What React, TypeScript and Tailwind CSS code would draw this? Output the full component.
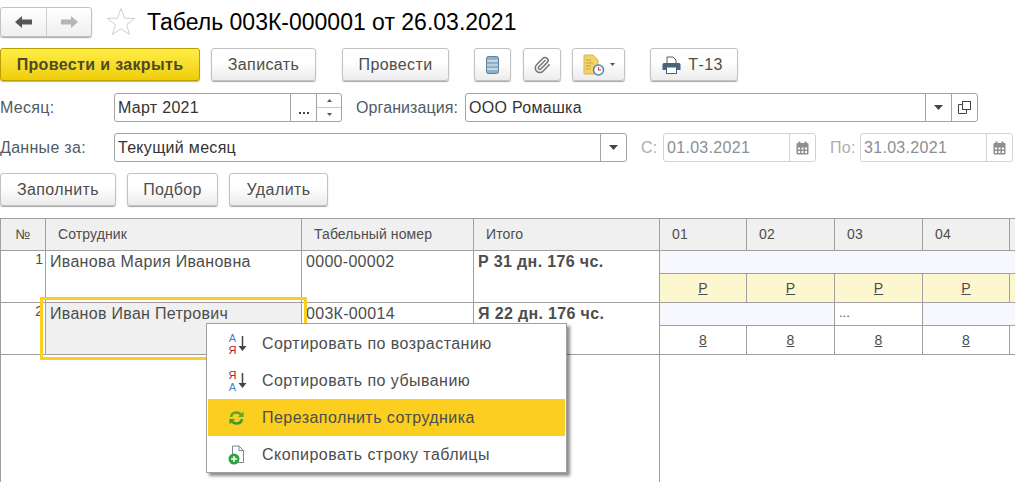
import { ReactNode } from "react";
import { Paperclip } from "lucide-react";

const Btn = ({ className = "", children }: { className?: string; children: ReactNode }) => (
  <div
    className={`h-[33px] flex items-center justify-center border border-[#c2c2c2] rounded-[3px] bg-gradient-to-b from-white from-40% to-[#ececec] text-[16px] tracking-[0.4px] text-[#4d4d4d] shadow-[0_1px_1px_rgba(0,0,0,0.35)] ${className}`}
  >
    {children}
  </div>
);

const Arrow = ({ flip, color }: { flip?: boolean; color: string }) => (
  <svg width="18" height="14" viewBox="0 0 18 14" className={flip ? "-scale-x-100" : ""}>
    <path d="M0 7 L7 1 V4.5 H17 V9.5 H7 V13 Z" fill={color} />
  </svg>
);

const Caret = () => (
  <svg width="9" height="5" viewBox="0 0 9 5">
    <path d="M0 0 H9 L4.5 5 Z" fill="#444" />
  </svg>
);

const Calendar = () => (
  <svg width="13" height="14" viewBox="0 0 13 14">
    <rect x="0.5" y="2" width="12" height="11.5" rx="1" fill="#8f8f8f" />
    <rect x="2.5" y="0.5" width="2" height="3" fill="#8f8f8f" />
    <rect x="8.5" y="0.5" width="2" height="3" fill="#8f8f8f" />
    <path d="M2 6.5h2v2H2zM5.500 6.500h2v2h-2zM9 6.500h2v2H9zM2 10h2v2H2zM5.500 10h2v2h-2zM9 10h2v2H9z" fill="#fff" />
  </svg>
);

const SortIcon = ({ desc }: { desc?: boolean }) => (
  <div className="w-[20px] h-[24px] flex items-center">
    <div className="flex flex-col text-[11px] leading-[12px] text-center w-[9px]">
      <span className={desc ? "text-[#b32020]" : "text-[#3d85c6]"}>{desc ? "Я" : "А"}</span>
      <span className={desc ? "text-[#3d85c6]" : "text-[#b32020]"}>{desc ? "А" : "Я"}</span>
    </div>
    <svg width="9" height="16" viewBox="0 0 9 16" className="ml-[1px]">
      <path d="M4.500 0 V11" stroke="#444" strokeWidth="1.500" />
      <path d="M0.500 10 H8.500 L4.500 15 Z" fill="#444" />
    </svg>
  </div>
);

const MenuItem = ({ icon, label, active }: { icon: ReactNode; label: string; active?: boolean }) => (
  <div className={`h-[37px] flex items-center ${active ? "bg-[#fbce1f]" : ""}`}>
    <div className="w-[54px] pl-[20px] shrink-0 flex items-center">{icon}</div>
    <span className="text-[16px] tracking-[0.45px] text-[#4d4d4d] whitespace-nowrap">{label}</span>
  </div>
);

const Head = ({ children, className = "" }: { children?: ReactNode; className?: string }) => (
  <div className={`bg-[#f0f0f0] border-r border-b border-[#a0a0a0] flex items-center text-[14px] tracking-[0.1px] text-[#4d4d4d] ${className}`}>
    {children}
  </div>
);

const days = ["01", "02", "03", "04", ""];

const cell = "row-span-2 border-r border-b border-[#a0a0a0] pl-[4px] text-[16px] leading-[22px] tracking-[0.3px] text-[#4d4d4d]";
const num = "row-span-2 border-r border-b border-[#a0a0a0] text-right pr-[2px] text-[14px] leading-[16px] text-[#4d4d4d]";
const total = "row-span-2 border-r border-b border-[#a0a0a0] pl-[4px] text-[16px] leading-[22px] font-bold tracking-[0.35px] text-[#4d4d4d]";

export default function App() {
  return (
    <div
      className="w-[1015px] h-[482px] overflow-hidden bg-white text-[#4d4d4d]"
      style={{ fontFamily: '"Liberation Sans", Arial, sans-serif' }}
    >
      {/* title */}
      <div className="h-[48px] pt-[7px] flex items-start">
        <div className="w-[92px] h-[30px] flex border border-[#c2c2c2] rounded-[3px] bg-gradient-to-b from-white to-[#efefef] shadow-[0_1px_1px_rgba(0,0,0,0.35)]">
          <div className="w-[46px] flex items-center justify-center border-r border-[#cfcfcf]">
            <Arrow color="#555" />
          </div>
          <div className="flex-1 flex items-center justify-center">
            <Arrow flip color="#b5b5b5" />
          </div>
        </div>
        <svg width="30" height="30" viewBox="0 0 30 30" className="ml-[14px]">
          <path d="M15 1.500 L18.600 11.200 L28.800 11.400 L20.600 17.700 L23.600 27.600 L15 21.700 L6.400 27.600 L9.400 17.700 L1.200 11.400 L11.400 11.200 Z" fill="none" stroke="#ccd0d4" strokeWidth="1" />
        </svg>
        <span className="ml-[11px] text-[23px] leading-[30px] text-black whitespace-nowrap">Табель 003К-000001 от 26.03.2021</span>
      </div>

      {/* command bar */}
      <div className="flex">
        <div className="w-[200px] h-[33px] flex items-center justify-center border border-[#b9a000] rounded-[3px] bg-gradient-to-b from-[#ffee44] to-[#efcd00] text-[16px] tracking-[0.35px] font-bold text-[#4d4a26] shadow-[0_1px_1px_rgba(0,0,0,0.3)]">
          Провести и закрыть
        </div>
        <Btn className="w-[105px] ml-[11px]">Записать</Btn>
        <Btn className="w-[107px] ml-[26px]">Провести</Btn>
        <Btn className="w-[37px] ml-[25px]">
          <svg width="13" height="18" viewBox="0 0 13 18">
            <rect x="0.500" y="0.500" width="12" height="17" rx="2" fill="#8fb0c8" stroke="#5f7f97" />
            <path d="M1 4.800H12M1 9H12M1 13.200H12" stroke="#e4edf3" strokeWidth="1.200" />
          </svg>
        </Btn>
        <Btn className="w-[38px] ml-[12px]">
          <Paperclip size={18} color="#777" />
        </Btn>
        <Btn className="w-[53px] ml-[11px] gap-[5px]">
          <svg width="22" height="22" viewBox="0 0 22 22">
            <path d="M1 1 H10 L15 6 V20 H1 Z" fill="#f1d26b" stroke="#d9b64a" />
            <path d="M3 6H8M3 9H10M3 12H8M3 15H7" stroke="#c9a53f" />
            <circle cx="15.500" cy="16" r="5" fill="#fff" stroke="#4f86b5" strokeWidth="1.500" />
            <path d="M15.500 13 V16 H18" stroke="#d0402b" strokeWidth="1.200" fill="none" />
          </svg>
          <svg width="5" height="3" viewBox="0 0 5 3">
            <path d="M0 0 H5 L2.500 3 Z" fill="#555" />
          </svg>
        </Btn>
        <Btn className="w-[88px] ml-[25px] gap-[7px] pr-[3px]">
          <svg width="19" height="18" viewBox="0 0 19 18">
            <path d="M5 1 H11 L14 4 V8 H5 Z" fill="#fff" stroke="#47637d" />
            <path d="M2 7 H17 a1.500 1.500 0 0 1 1.500 1.500 V14 H0.500 V8.500 A1.500 1.500 0 0 1 2 7 Z" fill="#47637d" />
            <rect x="4.500" y="11" width="10" height="6.500" fill="#fff" stroke="#47637d" />
          </svg>
          <span>Т-13</span>
        </Btn>
      </div>

      {/* month / organization */}
      <div className="flex items-center mt-[12px] h-[29px] text-[16px] tracking-[0.3px]">
        <span className="w-[114px] text-[#4f5b66]">Месяц:</span>
        <div className="w-[228px] h-[29px] flex border border-[#a3a3a3] rounded-[3px]">
          <span className="flex-1 pl-[3px] leading-[27px] text-[#333]">Март 2021</span>
          <div className="w-[26px] border-l border-[#a3a3a3] flex items-end justify-center pb-[7px]">
            <div className="flex gap-[2px]">
              <i className="w-[2px] h-[2px] bg-[#444]" />
              <i className="w-[2px] h-[2px] bg-[#444]" />
              <i className="w-[2px] h-[2px] bg-[#444]" />
            </div>
          </div>
          <div className="w-[25px] border-l border-[#a3a3a3] flex flex-col">
            <div className="flex-1 border-b border-[#c4c4c4] flex items-center justify-center">
              <svg width="5" height="3" viewBox="0 0 5 3"><path d="M0 3 H5 L2.500 0 Z" fill="#555" /></svg>
            </div>
            <div className="flex-1 flex items-center justify-center">
              <svg width="5" height="3" viewBox="0 0 5 3"><path d="M0 0 H5 L2.500 3 Z" fill="#555" /></svg>
            </div>
          </div>
        </div>
        <span className="w-[123px] pl-[14px] whitespace-nowrap tracking-[0.1px] text-[#4f5b66]">Организация:</span>
        <div className="w-[513px] h-[29px] flex border border-[#a3a3a3] rounded-[3px]">
          <span className="flex-1 pl-[3px] leading-[27px] text-[#333]">ООО Ромашка</span>
          <div className="w-[26px] border-l border-[#a3a3a3] flex items-center justify-center">
            <Caret />
          </div>
          <div className="w-[26px] border-l border-[#a3a3a3] flex items-center justify-center">
            <svg width="13" height="13" viewBox="0 0 13 13" fill="none" stroke="#444">
              <rect x="4.500" y="0.500" width="8" height="8" />
              <path d="M4.500 3.500 H0.500 V12.500 H8.500 V8.500" />
            </svg>
          </div>
        </div>
      </div>

      {/* period */}
      <div className="flex items-center mt-[11px] h-[29px] text-[16px] tracking-[0.3px]">
        <span className="w-[114px] text-[#4f5b66]">Данные за:</span>
        <div className="w-[513px] h-[29px] flex border border-[#a3a3a3] rounded-[3px]">
          <span className="flex-1 pl-[3px] leading-[27px] text-[#333]">Текущий месяц</span>
          <div className="w-[26px] border-l border-[#a3a3a3] flex items-center justify-center">
            <Caret />
          </div>
        </div>
        <span className="w-[36px] pl-[14px] text-[#aeaeae]">С:</span>
        <div className="w-[153px] h-[29px] flex border border-[#d2d2d2] rounded-[3px]">
          <span className="flex-1 pl-[3px] leading-[27px] text-[#8a8f96]">01.03.2021</span>
          <div className="w-[26px] border-l border-[#d2d2d2] flex items-center justify-center">
            <Calendar />
          </div>
        </div>
        <span className="w-[44px] pl-[14px] text-[#aeaeae]">По:</span>
        <div className="w-[153px] h-[29px] flex border border-[#d2d2d2] rounded-[3px]">
          <span className="flex-1 pl-[3px] leading-[27px] text-[#8a8f96]">31.03.2021</span>
          <div className="w-[26px] border-l border-[#d2d2d2] flex items-center justify-center">
            <Calendar />
          </div>
        </div>
      </div>

      {/* table commands */}
      <div className="flex gap-[11px] mt-[11px]">
        <Btn className="w-[116px]">Заполнить</Btn>
        <Btn className="w-[91px]">Подбор</Btn>
        <Btn className="w-[99px]">Удалить</Btn>
      </div>

      {/* table */}
      <div className="relative mt-[12px] h-[264px] border-l border-[#a0a0a0]">
        <div className="grid grid-cols-[45px_256px_172px_186px_87px_88px_88px_87px_87px] grid-rows-[32px_23px_29px_23px_29px] border-t border-[#a0a0a0] w-[1100px]">
          <Head className="justify-center">№</Head>
          <Head className="pl-[12px]">Сотрудник</Head>
          <Head className="pl-[12px]">Табельный номер</Head>
          <Head className="pl-[12px]">Итого</Head>
          {days.map((d, i) => (
            <Head key={i} className="pl-[12px]">{d}</Head>
          ))}

          <div className={num}>1</div>
          <div className={cell}>Иванова Мария Ивановна</div>
          <div className={cell}>0000-00002</div>
          <div className={total}>Р 31 дн. 176 чс.</div>
          <div className="col-span-5 bg-[#f7f8fd] border-b border-[#a0a0a0]" />
          {days.map((d, i) => (
            <div key={i} className="bg-[#fdf7cf] border-r border-b border-[#a0a0a0] flex items-center justify-center text-[14px] underline text-[#4d4d4d]">
              {d && "Р"}
            </div>
          ))}

          <div className={num}>2</div>
          <div className={`relative bg-[#f0f0f0] ${cell}`}>
            Иванов Иван Петрович
            <div className="absolute -left-[6px] -top-[6px] w-[267px] h-[63px] border-[3px] border-[#fbce1f]" />
          </div>
          <div className={cell}>003К-00014</div>
          <div className={total}>Я 22 дн. 176 чс.</div>
          <div className="col-span-2 bg-[#f7f8fd] border-b border-r border-[#a0a0a0]" />
          <div className="border-r border-b border-[#a0a0a0] pl-[4px] text-[13px] leading-[20px] text-[#4d4d4d]">...</div>
          <div className="col-span-2 bg-[#f7f8fd] border-b border-[#a0a0a0]" />
          {days.map((d, i) => (
            <div key={i} className="border-r border-b border-[#a0a0a0] flex items-center justify-center text-[14px] underline text-[#4d4d4d]">
              {d && "8"}
            </div>
          ))}
        </div>
        <div className="ml-[658px] h-[130px] border-l border-[#a0a0a0]" />

        {/* context menu */}
        <div className="absolute left-[205px] top-[105px] w-[361px] h-[150px] bg-white border border-[#a0a0a0] p-[1px] shadow-[3px_3px_3px_rgba(0,0,0,0.45)]">
          <MenuItem icon={<SortIcon />} label="Сортировать по возрастанию" />
          <MenuItem icon={<SortIcon desc />} label="Сортировать по убыванию" />
          <MenuItem
            active
            label="Перезаполнить сотрудника"
            icon={
              <svg width="15" height="14" viewBox="0 0 15 14" fill="none" className="ml-[1px]">
                <path d="M2 6 C2.500 3 5 1.500 7.500 1.500 C9.500 1.500 11 2.500 12 3.500" stroke="#5aa827" strokeWidth="2.500" />
                <path d="M14.500 0.500 V6 H9 Z" fill="#5aa827" />
                <path d="M13 8 C12.500 11 10 12.500 7.500 12.500 C5.500 12.500 4 11.500 3 10.500" stroke="#3f9a2e" strokeWidth="2.500" />
                <path d="M0.500 13.500 V8 H6 Z" fill="#3f9a2e" />
              </svg>
            }
          />
          <MenuItem
            label="Скопировать строку таблицы"
            icon={
              <svg width="18" height="20" viewBox="0 0 18 20" fill="none">
                <path d="M4.500 1 H11 L15.500 5.500 V17.500 H4.500 Z" fill="#fff" stroke="#7b8894" />
                <path d="M11 1 V5.500 H15.500" stroke="#7b8894" />
                <circle cx="6" cy="14" r="5.500" fill="#2fa33f" />
                <path d="M6 11 V17 M3 14 H9" stroke="#fff" strokeWidth="1.500" />
              </svg>
            }
          />
        </div>
      </div>
    </div>
  );
}
